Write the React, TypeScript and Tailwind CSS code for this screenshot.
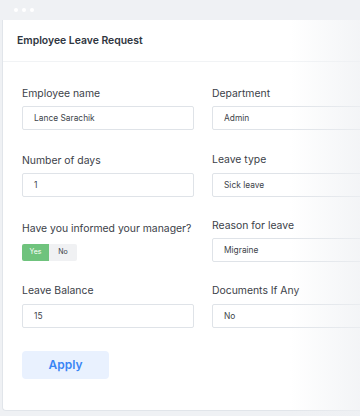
import React from "react";

const font = { fontFamily: "Inter, 'Noto Sans', 'Liberation Sans', sans-serif" };

function Label({ children, className = "" }: { children: React.ReactNode; className?: string }) {
  return <div className={`h-[14px] text-[10.4px] leading-[14px] text-[#3b4148] whitespace-nowrap ${className}`}>{children}</div>;
}

function Field({ value, className = "" }: { value: string; className?: string }) {
  return (
    <div
      className={`h-[24px] w-[172px] rounded-[2px] border border-[#dfe3e8] bg-white pl-[11px] flex items-center text-[8.4px] text-[#3d434a] ${className}`}
    >
      {value}
    </div>
  );
}

export default function App() {
  return (
    <div style={font} className="relative w-[360px] h-[416px] overflow-hidden bg-[#eff1f4]">
      {/* top bar */}
      <div className="h-[20px] flex items-center gap-[4px] pl-[14px]">
        <span className="w-[4px] h-[4px] rounded-full bg-white" />
        <span className="w-[4px] h-[4px] rounded-full bg-white" />
        <span className="w-[4px] h-[4px] rounded-full bg-white" />
      </div>
      {/* window */}
      <div className="ml-[2px] w-[420px] h-[391px] bg-white border-l border-b border-[#e1e5ea] rounded-bl-[4px] flex flex-col">
        <div className="h-[42px] flex items-center pl-[14px] border-b border-[#f1f3f5] shrink-0">
          <span className="text-[10.4px] font-semibold text-[#2f3640]">Employee Leave Request</span>
        </div>
        <div className="flex gap-[18px] pl-[19px] pt-[25px]">
          {/* left column */}
          <div className="flex flex-col w-[172px]">
            <Label>Employee name</Label>
            <Field value="Lance Sarachik" className="mt-[5px]" />
            <Label className="mt-[24px]">Number of days</Label>
            <Field value="1" className="mt-[5px]" />
            <Label className="mt-[25px]">Have you informed your manager?</Label>
            <div className="mt-[8px] flex h-[17px] w-[55px] rounded-[2px] overflow-hidden text-[7px]">
              <div className="w-[27px] bg-[#6fc37d] text-white flex items-center justify-center">Yes</div>
              <div className="flex-1 bg-[#f0f1f3] text-[#3b4148] flex items-center justify-center">No</div>
            </div>
            <Label className="mt-[23px]">Leave Balance</Label>
            <Field value="15" className="mt-[6px]" />
            <button className="mt-[23px] w-[87px] h-[28px] rounded-[4px] bg-[#e9f1fe] text-[#3a85f5] text-[12px] font-semibold flex items-center justify-center">
              Apply
            </button>
          </div>
          {/* right column */}
          <div className="flex flex-col w-[172px]">
            <Label>Department</Label>
            <Field value="Admin" className="mt-[5px]" />
            <Label className="mt-[23px]">Leave type</Label>
            <Field value="Sick leave" className="mt-[6px]" />
            <Label className="mt-[22px]">Reason for leave</Label>
            <Field value="Migraine" className="mt-[5px]" />
            <Label className="mt-[22px]">Documents If Any</Label>
            <Field value="No" className="mt-[6px]" />
          </div>
        </div>
      </div>
      {/* right fade */}
      <div className="pointer-events-none absolute top-[20px] right-0 h-[396px] w-[70px] bg-gradient-to-r from-transparent to-[#eef0f3]/70" />
    </div>
  );
}
